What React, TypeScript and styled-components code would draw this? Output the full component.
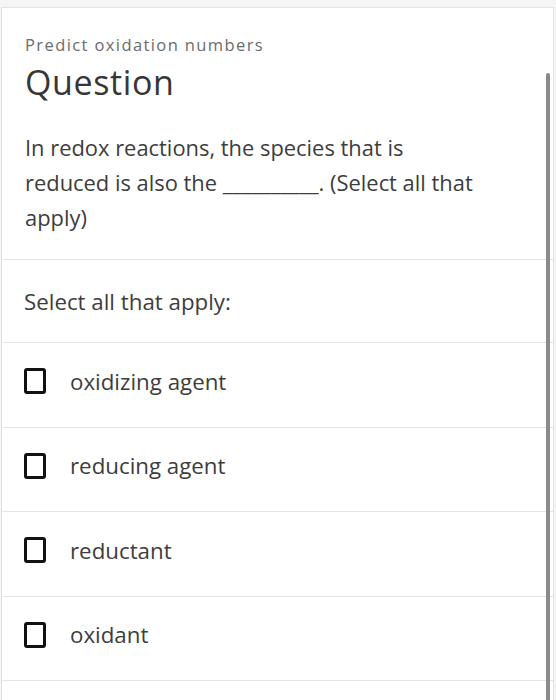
import React from 'react';
import styled, { createGlobalStyle } from 'styled-components';

const GlobalStyle = createGlobalStyle`
  html, body {
    margin: 0;
    padding: 0;
    background: #f5f5f5;
    font-family: "Open Sans", "Noto Sans", sans-serif;
    overflow: hidden;
  }
`;

const Page = styled.div`
  padding: 7px 2px 0 1px;
`;

const Card = styled.div`
  position: relative;
  background: #fff;
  border: 1px solid #e2e2e2;
  min-height: 720px;
`;

const Header = styled.div`
  padding: 25px 23px 0;
`;

const Kicker = styled.div`
  font-size: 16.5px;
  line-height: 24px;
  letter-spacing: 1.4px;
  color: #6b6b6b;
`;

const Title = styled.h1`
  margin: 5px 0 0;
  font-size: 34px;
  line-height: 40px;
  font-weight: 400;
  letter-spacing: 0.6px;
  color: #363636;
`;

const Prompt = styled.p`
  margin: 0;
  padding: 28px 72px 24px 23px;
  font-size: 21.9px;
  line-height: 35px;
  color: #3d3d3d;
  border-bottom: 1px solid #e4e4e4;
`;

const Row = styled.div<{ $height: number; $lift: number }>`
  box-sizing: border-box;
  display: flex;
  align-items: center;
  height: ${(p) => p.$height}px;
  padding: 0 22px ${(p) => p.$lift}px;
  border-bottom: 1px solid #e4e4e4;
  font-size: 22.3px;
  color: #3d3d3d;
`;

const Box = styled.span`
  box-sizing: border-box;
  width: 22px;
  height: 26px;
  border: 3px solid #111;
  border-radius: 3px;
  flex: none;
  margin-right: 24px;
`;

const Thumb = styled.div`
  position: absolute;
  top: 65px;
  right: 3px;
  width: 4px;
  height: 700px;
  background: #8a8a8a;
  border-radius: 2px 2px 0 0;
`;

const options = ['oxidizing agent', 'reducing agent', 'reductant', 'oxidant'];

export default function App() {
  return (
    <Page>
      <GlobalStyle />
      <Card>
        <Header>
          <Kicker>Predict oxidation numbers</Kicker>
          <Title>Question</Title>
        </Header>
        <Prompt>
          In redox reactions, the species that is reduced is also the __________. (Select all that apply)
        </Prompt>
        <Row $height={83} $lift={0}>Select all that apply:</Row>
        {options.map((o) => (
          <Row key={o} $height={84.5} $lift={7}>
            <Box />
            {o}
          </Row>
        ))}
        <Thumb />
      </Card>
    </Page>
  );
}
